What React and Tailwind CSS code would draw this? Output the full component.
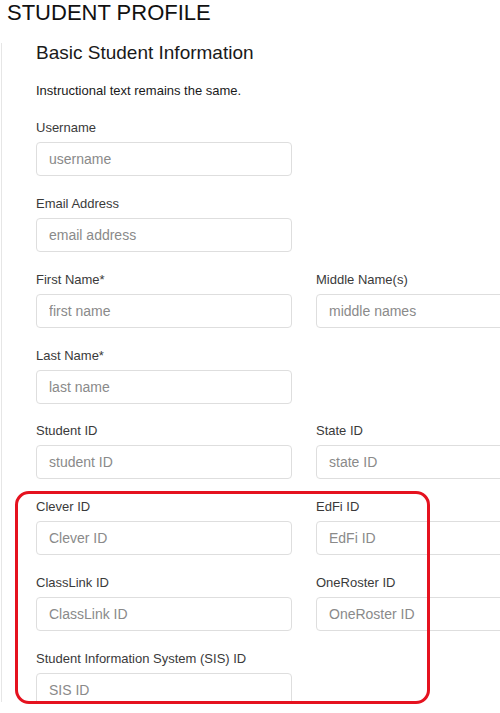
import React from "react";

const rows = [
  [["Username", "username"], null],
  [["Email Address", "email address"], null],
  [["First Name*", "first name"], ["Middle Name(s)", "middle names"]],
  [["Last Name*", "last name"], null],
  [["Student ID", "student ID"], ["State ID", "state ID"]],
  [["Clever ID", "Clever ID"], ["EdFi ID", "EdFi ID"]],
  [["ClassLink ID", "ClassLink ID"], ["OneRoster ID", "OneRoster ID"]],
  [["Student Information System (SIS) ID", "SIS ID"], null],
];

function Field({ label, placeholder }) {
  return (
    <div className="flex flex-col">
      <label className="text-[13px] leading-[16px] h-[16px] text-[#3a3a3a] whitespace-nowrap">{label}</label>
      <input
        className="mt-[6px] h-[34px] w-[256px] rounded-[4px] border border-[#dedede] bg-white pl-[12px] text-[14px] text-[#333] placeholder:text-[#8a8a8a] outline-none"
        placeholder={placeholder}
      />
    </div>
  );
}

export default function App() {
  return (
    <div
      className="relative h-[713px] w-[500px] overflow-hidden bg-white text-[#111]"
      style={{ fontFamily: '"Liberation Sans", Arial, Helvetica, sans-serif' }}
    >
      <div className="h-[702px] overflow-hidden">
        <h1 className="pt-[2px] pl-[7px] text-[22px] leading-[22px] h-[24px] text-[#111]">STUDENT PROFILE</h1>
        <div className="mt-[2px] ml-[1px] border-l border-[#e6e6e6] pl-[34px]">
          <h2 className="mt-[19px] text-[19px] leading-[19px] text-[#1a1a1a]">Basic Student Information</h2>
          <p className="mt-[22px] text-[13px] leading-[13px] text-[#1a1a1a]">Instructional text remains the same.</p>
          <div className="mt-[23px] flex flex-col gap-y-[19.86px]">
            {rows.map((r, i) => (
              <div key={i} className="grid grid-cols-[256px_256px] gap-x-[24px]">
                <Field label={r[0][0]} placeholder={r[0][1]} />
                {r[1] ? <Field label={r[1][0]} placeholder={r[1][1]} /> : <div />}
              </div>
            ))}
          </div>
        </div>
      </div>
      <div className="pointer-events-none absolute left-[15px] top-[491px] h-[213px] w-[415px] rounded-[14px] border-[3px] border-[#e5121f]" />
    </div>
  );
}
